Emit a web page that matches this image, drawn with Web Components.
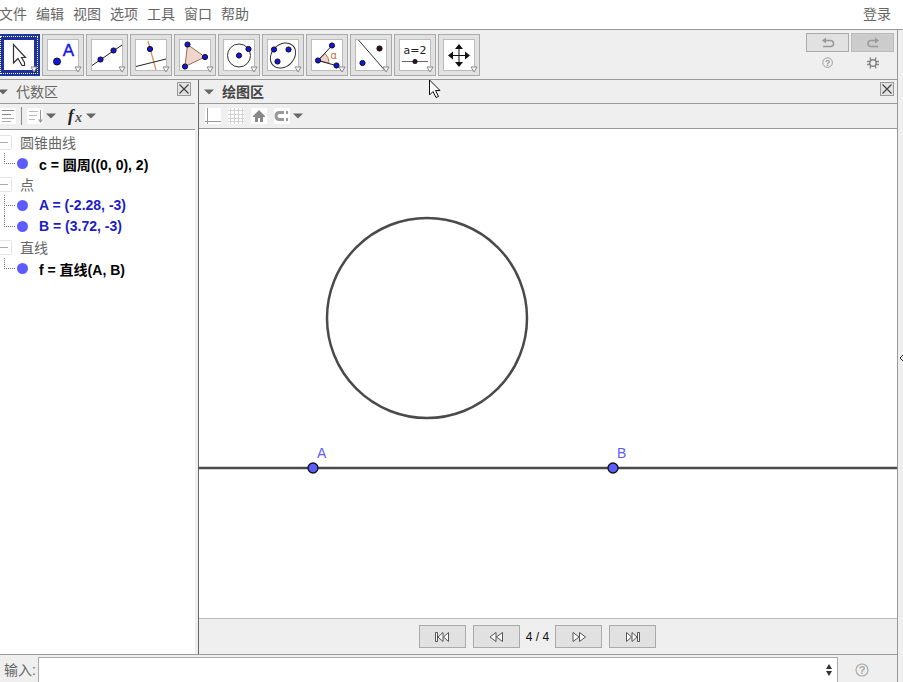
<!DOCTYPE html>
<html lang="zh-CN">
<head>
<meta charset="utf-8">
<title>GeoGebra</title>
<style>
html, body { margin: 0; height: 100%; }
body { font: 14px/20px "Liberation Sans", "Noto Sans CJK SC", sans-serif; color: #666; background: #efefef; overflow: hidden; }
geo-app { height: 100%; }
</style>
</head>
<body>
<geo-app></geo-app>
<script>
const define = (name, html, setup) => customElements.define(name, class extends HTMLElement {
  constructor() {
    super();
    const t = document.createElement('template');
    t.innerHTML = html;
    this.attachShadow({ mode: 'open' }).append(t.content.cloneNode(true));
  }
  connectedCallback() { if (setup) setup(this, this.shadowRoot); }
});

const dot = (x, y, r = 2.6, c = '#1414e6') => `<circle cx="${x}" cy="${y}" r="${r}" fill="${c}" stroke="#111" stroke-width="1"/>`;
const icons = {
  move: [30, 30, '<path d="M9.500 4.500V23L14 18.500L18 25.500H20.500V22.500L17.500 17.500H21.500Z" fill="#fff" stroke="#333" stroke-width="1.200"/>'],
  point: [30, 30, dot(9, 21.5, 3.5) + '<text x="20.500" y="16" text-anchor="middle" font-size="17" font-family="Liberation Sans" fill="#1414e6" stroke="#1414e6" stroke-width=".4">A</text>'],
  line: [30, 30, '<path d="M0 25.500L30 5" stroke="#222" fill="none"/>' + dot(8.5, 19.5) + dot(21.5, 10.5)],
  perp: [30, 30, '<path d="M12 1L20 30" stroke="#d9935b" stroke-width="1.300"/><path d="M0 26.500L30 19" stroke="#222"/>' + dot(14, 9)],
  polygon: [30, 30, '<path d="M7.500 4.500L25 17L5 26.500Z" fill="#edd6cb" stroke="#a06b4a"/>' + dot(7.5, 4.5) + dot(25, 17) + dot(5, 26.5)],
  circle: [30, 30, '<circle cx="15" cy="15.500" r="11.500" fill="none" stroke="#333"/>' + dot(15, 15.5) + dot(24.5, 9)],
  conic: [30, 30, '<ellipse cx="15" cy="15.500" rx="14" ry="11" transform="rotate(-45 15 15.500)" fill="none" stroke="#333"/>' + dot(6, 9.5) + dot(20.5, 9.5) + dot(9.5, 21.5)],
  angle: [30, 30, '<path d="M6 20.500L13 13.500Q17 17 17 23Z" fill="#edd6cb" stroke="#b47a55"/><path d="M20 5.500L6 20.500L24 25.500" fill="none" stroke="#222"/>' + dot(20, 5.5) + dot(6, 20.5) + dot(24.5, 25.5) + '<text x="21.500" y="19" text-anchor="middle" font-size="10" fill="#b8622d">α</text>'],
  reflect: [30, 30, '<path d="M2.500 0L28.500 30" stroke="#333"/>' + dot(23.5, 8.5, 2.6, '#301018') + dot(6.5, 23)],
  slider: [30, 30, '<text x="15" y="14" text-anchor="middle" font-size="11" fill="#222" font-family="DejaVu Sans">a=2</text><path d="M2 21.500H28" stroke="#666"/><circle cx="15" cy="21.500" r="2.500" fill="#201520"/>'],
  view: [30, 30, '<path d="M15 7V24M7 15.500H23" stroke="#111"/><path d="M15 4L19 9H11ZM15 27L19 22H11ZM4 15.500L9 11.500V19.500ZM26 15.500L21 11.500V19.500Z" fill="#111"/>'],
  undo: [16, 14, '<path d="M4 4.500H10.500Q13.500 4.500 13.500 7.500T10.500 10.500H3" fill="none" stroke="#999" stroke-width="1.500"/><path d="M2 4.500L6 1.500V7.500Z" fill="#999"/>'],
  redo: [16, 14, '<path d="M11 4.500H6Q3 4.500 3 7.500T6 10.500H13" fill="none" stroke="#999" stroke-width="1.500"/><path d="M14 4.500L10 1.500V7.500Z" fill="#999"/>'],
  help: [14, 14, '<circle cx="7" cy="7" r="6" fill="none" stroke="currentColor" stroke-width="1.200"/><text x="7" y="11" text-anchor="middle" font-size="11" font-weight="700" fill="currentColor" font-family="Liberation Sans">?</text>'],
  gear: [12, 12, '<circle cx="6" cy="6" r="3.300" fill="none" stroke="#888" stroke-width="1.500"/><path d="M4 3.500L3 .5M8 3.500L9 .5M4 8.500L3 11.500M8 8.500L9 11.500M3.500 4.500H0M8.500 4.500H12M3.500 7.500H0M8.500 7.500H12" stroke="#888" stroke-width="1.400"/>'],
  down: [10, 6, '<path d="M0 .5H10L5 5.500Z" fill="#666"/>'],
  close: [14, 14, '<rect x=".5" y=".5" width="13" height="13" fill="#e3e3e3" stroke="#999"/><path d="M2.500 2.500L11.500 11.500M11.500 2.500L2.500 11.500" stroke="#444" stroke-width="1.200"/>'],
  desc: [16, 16, '<path d="M0 0H16V16H0Z" fill="#fff"/><path d="M2 2.500H14M2 6.500H11" stroke="#888"/><path d="M2 10.500H14M2 13.500H11" stroke="#aaa"/>'],
  sort: [16, 16, '<path d="M0 0H16V16H0Z" fill="#fff"/><path d="M2 3.500H11M2 7.500H10M2 11.500H8" stroke="#bbb"/><path d="M13.500 2V12" stroke="#999"/><path d="M11 11.500H16L13.500 15Z" fill="#999"/>'],
  fx: [17, 22, '<g font-family="Liberation Serif" font-style="italic" font-weight="700"><text x="2" y="16" font-size="17" fill="#222">f</text><text x="9" y="17" font-size="14" fill="#555">x</text></g>'],
  axes: [16, 16, '<path d="M0 0H16V16H0Z" fill="#fff"/><path d="M2.500 0V16M0 13.500H16" stroke="#999"/>'],
  grid: [16, 16, '<path d="M0 0H16V16H0Z" fill="#fff"/><path d="M2.500 0V16M6.500 0V16M10.500 0V16M14.500 0V16M0 2.500H16M0 6.500H16M0 10.500H16M0 13.500H16" stroke="#d2d2d2"/>'],
  home: [16, 16, '<path d="M0 0H16V16H0Z" fill="#fff"/><path d="M8 2L14 8V9H12V14H9V10H7V14H4V9H2V8Z" fill="#888"/>'],
  magnet: [16, 16, '<path d="M0 0H16V16H0Z" fill="#fff"/><path d="M10 4.500H5.500Q2 4.500 2 8T5.500 11.500H10" fill="none" stroke="#999" stroke-width="3"/><path d="M12 3H14V6H12ZM12 10H14V13H12Z" fill="#999"/>'],
  prev: [14, 12, '<path d="M7 1.500V10.500L1 6ZM13.500 1.500V10.500L7.500 6Z" fill="#fff" stroke="#555"/>'],
  next: [14, 12, '<path d="M1 1.500V10.500L7 6ZM7.500 1.500V10.500L13.500 6Z" fill="#fff" stroke="#555"/>'],
  first: [16, 12, '<path d="M1.500 1.500H3.500V10.500H1.500ZM9 1.500V10.500L4 6ZM14.500 1.500V10.500L9.500 6Z" fill="#fff" stroke="#555"/>'],
  last: [16, 12, '<path d="M12.500 1.500H14.500V10.500H12.500ZM1.500 1.500V10.500L6.500 6ZM7 1.500V10.500L12 6Z" fill="#fff" stroke="#555"/>'],
  spin: [6, 12, '<path d="M3 0L6 5H0ZM3 12L6 7H0Z" fill="#333"/>'],
  collapse: [3, 8, '<path d="M3 1L0 4L3 7" fill="none" stroke="#222"/>'],
  cursor: [14, 20, '<path d="M.5 1V16L4 12.500L7 18.500L9.500 17.500L6.500 11.500H11Z" fill="#fff" stroke="#111"/>']
};

define('geo-icon', `<style>:host{display:block;flex:none;line-height:0}svg{display:block;overflow:hidden;font-family:"Open Sans",sans-serif}</style>`, (el, root) => {
  const [w, h, body] = icons[el.getAttribute('name')];
  const k = Number(el.getAttribute('scale') || 1);
  root.innerHTML += `<svg width="${w * k}" height="${h * k}" viewBox="0 0 ${w} ${h}" aria-hidden="true">${body}</svg>`;
});

define('geo-menu', `<style>
:host{display:flex;justify-content:space-between;background:#fff;border-bottom:1px solid #999;height:29px;align-items:center;overflow:hidden}
nav{display:flex;gap:9px;margin-left:-1px}
button{font:inherit;color:inherit;border:0;padding:0 0 2px;background:none;white-space:nowrap}
nav+button{margin-right:12px}
</style><nav></nav><button>登录</button>`, (el, root) => {
  root.querySelector('nav').innerHTML = ['文件', '编辑', '视图', '选项', '工具', '窗口', '帮助'].map(t => `<button>${t}</button>`).join('');
});

define('geo-tool', `<style>
:host{display:block;flex:none}
button{position:relative;box-sizing:border-box;display:grid;place-items:center;width:42px;height:42px;padding:0;background:#e1e1e1;border:1px solid #aaa}
.face{background:#fff;border:1px solid #bbb}
.arrow{position:absolute;right:1px;bottom:2px}
:host([selected]) button{background:#1c2fa0;border-color:#173f8c;outline:1px dotted #fff;outline-offset:-3px}
:host([selected]) .face{border-color:#1c2fa0}
</style><button><div class="face"></div><svg class="arrow" width="8" height="7" aria-hidden="true"><path d="M1 1H7L4 6Z" fill="#fff" stroke="#888"/></svg></button>`, (el, root) => {
  const name = el.getAttribute('icon');
  root.querySelector('button').setAttribute('aria-label', name);
  root.querySelector('.face').innerHTML = `<geo-icon name="${name}"></geo-icon>`;
});

define('geo-toolbar', `<style>
:host{display:flex;justify-content:space-between;height:49px;border-bottom:1px solid #999;overflow:hidden}
.tools{display:flex;gap:2px;padding-top:4px;margin-left:-2px}
.side{display:grid;grid-template-columns:43px 43px;grid-template-rows:19px 14px;gap:4px 2px;padding:3px 3px 0 0;align-content:start;color:#999}
button{display:grid;place-items:center;padding:0;border:1px solid #aaa;background:#e1e1e1;color:inherit}
button:disabled{background:#ccc;border-color:#bbb}
.plain{border:0;background:none}
</style><div class="tools"></div><div class="side">
<button aria-label="撤销"><geo-icon name="undo"></geo-icon></button><button aria-label="重做" disabled><geo-icon name="redo"></geo-icon></button>
<button class="plain" aria-label="帮助"><geo-icon name="help" scale=".8"></geo-icon></button><button class="plain" aria-label="设置"><geo-icon name="gear"></geo-icon></button></div>`, (el, root) => {
  root.querySelector('.tools').innerHTML = ['move', 'point', 'line', 'perp', 'polygon', 'circle', 'conic', 'angle', 'reflect', 'slider', 'view'].map((n, i) => `<geo-tool icon="${n}" ${i ? '' : 'selected'}></geo-tool>`).join('');
});

define('geo-panel', `<style>
:host{display:flex;flex-direction:column;min-width:0;min-height:0}
header{display:flex;align-items:center;height:23px;border-bottom:1px solid #999;padding:0 var(--end,3px) 0 5px;overflow:hidden}
header>geo-icon{margin-left:var(--shift,0px)}
h2{flex:1;font:inherit;font-weight:var(--title-weight,400);color:var(--title-color,inherit);margin:0 0 0 8px}
header button{padding:0;border:0;background:none;margin-bottom:5px}
.styles{display:flex;align-items:center;height:var(--styles-height,24px);border-bottom:1px solid #999}
.body{flex:1;min-height:0;background:#fff;display:flex;flex-direction:column}
</style><header><geo-icon name="down"></geo-icon><h2><slot name="title"></slot></h2><button aria-label="关闭"><geo-icon name="close"></geo-icon></button></header>
<div class="styles"><slot name="styles"></slot></div><div class="body"><slot></slot></div>`);

define('geo-styles', `<style>
:host{display:flex;align-items:center}
button{display:flex;align-items:center;gap:3px;padding:0;border:0;background:none}
.algebra,.graphics{display:flex;align-items:center}
.algebra{gap:5px;padding-bottom:2px}.graphics{gap:7px;padding-left:6px}
i{width:1px;height:18px;background:#888}
.algebra button:last-child{margin-left:5px}
</style><div></div>`, (el, root) => {
  const b = (n, menu) => `<button aria-label="${n}"><geo-icon name="${n}"></geo-icon>${menu ? '<geo-icon name="down"></geo-icon>' : ''}</button>`;
  const kind = el.getAttribute('kind'), d = root.querySelector('div');
  d.className = kind;
  d.innerHTML = kind === 'algebra' ? b('desc') + '<i></i>' + b('sort', 1) + b('fx', 1) : b('axes') + b('grid') + b('home') + b('magnet', 1);
});

define('geo-group', `<style>
:host{display:block}
.head{display:flex;align-items:center;height:21px;gap:8px}
button{box-sizing:border-box;width:12px;height:15px;padding:0;border:1px solid #e4e4e4;border-left:0;border-radius:0 2px 2px 0;background:#fff;display:flex;align-items:center}
button::before{content:"";width:8px;height:1px;background:#aaa}
</style><div class="head"><button aria-label="折叠"></button><slot name="label"></slot></div><slot></slot>`);

define('geo-object', `<style>
:host{display:grid;grid-template-columns:17px 22px 1fr;height:21px;color:#000;font-weight:700;white-space:nowrap}
:host([point]){color:#1c1cc8}
.branch{width:10px;height:10px;margin-left:4px;border:dotted #777;border-width:0 0 1px 1px}
:host([more]) .branch::after{content:"";display:block;height:21px;margin-left:-1px;border-left:1px dotted #777}
button{width:11px;height:11px;margin-top:5px;padding:0;border:0;border-radius:50%;background:#5c5cff}
span{padding-top:2px}
:host([point]) span{padding-top:0}
</style><div class="branch"></div><button aria-label="显示"></button><span><slot></slot></span>`);

define('geo-canvas', `<style>:host{display:block;flex:1;min-height:0}svg{display:block;width:100%;height:100%;font:14px "Liberation Sans",sans-serif}</style>
<svg role="img" aria-label="绘图区"><g fill="none" stroke="#4a4a4a" stroke-width="2.500"><circle cx="228" cy="189" r="100"/><line x1="0" y1="339" x2="100%" y2="339"/></g>
<g fill="#5c5cff" stroke="#111" stroke-width="1.300"><circle cx="114" cy="339" r="5"/><circle cx="414" cy="339" r="5"/></g>
<g fill="#5c5cff"><text x="118" y="329">A</text><text x="418" y="329">B</text></g></svg>`);

define('geo-steps', `<style>
:host{display:flex;justify-content:center;align-items:center;gap:7px;height:35px;padding-right:21px;background:#efefef;border-top:1px solid #bbb;font-size:12px;color:#111}
button{box-sizing:border-box;width:47px;height:23px;display:grid;place-items:center;padding:0;border:1px solid #aaa;background:#e1e1e1}
span{margin:0 -1px}
</style><button aria-label="第一步"><geo-icon name="first"></geo-icon></button><button aria-label="上一步"><geo-icon name="prev"></geo-icon></button><span>4 / 4</span><button aria-label="下一步"><geo-icon name="next"></geo-icon></button><button aria-label="最后一步"><geo-icon name="last"></geo-icon></button>`);

define('geo-input', `<style>
:host{display:flex;height:27px;border-top:1px solid #999;overflow:hidden}
label{padding:5px 2px 0 4px}
.field{flex:1;display:flex;align-items:center;margin-top:2px;border:solid #aaa;border-width:1px 1px 0;background:#fff}
input{flex:1;min-width:0;height:20px;border:0;padding:0 4px;font:inherit;outline:0}
button{border:0;background:none;padding:0 5px}
.help{width:59px;color:#aaa;display:grid;place-items:center;padding:3px 11px 0 0}
</style><label for="command">输入:</label><div class="field"><input id="command"><button aria-label="历史"><geo-icon name="spin"></geo-icon></button></div><button class="help" aria-label="输入帮助"><geo-icon name="help"></geo-icon></button>`);

define('geo-app', `<style>
:host{display:grid;grid-template-columns:minmax(0,1fr) 5px;grid-template-rows:auto minmax(0,1fr);position:relative}
geo-menu{grid-column:1/-1}
.main{display:flex;flex-direction:column;min-height:0;border-right:1px solid #999}
.views{flex:1;display:grid;grid-template-columns:195px minmax(0,1fr);column-gap:3px;min-height:0}
.algebra{--shift:-7px;--end:4px;--styles-height:25px}
.algebra>geo-group:first-of-type{margin-top:2px}
.graphics{border-left:1px solid #666;--title-weight:700;--title-color:#444}
.edge{border:0;padding:4px 0 0;background:none;display:grid;place-items:center end}
.cursor{position:absolute;left:429px;top:79px}
</style><geo-menu></geo-menu><div class="main"><geo-toolbar></geo-toolbar><div class="views">
<geo-panel class="algebra"><span slot="title">代数区</span><geo-styles slot="styles" kind="algebra"></geo-styles>
<geo-group><span slot="label">圆锥曲线</span><geo-object>c = 圆周((0, 0), 2)</geo-object></geo-group>
<geo-group><span slot="label">点</span><geo-object point more>A = (-2.28, -3)</geo-object><geo-object point>B = (3.72, -3)</geo-object></geo-group>
<geo-group><span slot="label">直线</span><geo-object>f = 直线(A, B)</geo-object></geo-group></geo-panel>
<geo-panel class="graphics"><span slot="title">绘图区</span><geo-styles slot="styles" kind="graphics"></geo-styles><geo-canvas></geo-canvas><geo-steps></geo-steps></geo-panel>
</div><geo-input></geo-input></div><button class="edge" aria-label="展开侧栏"><geo-icon name="collapse"></geo-icon></button><geo-icon class="cursor" name="cursor"></geo-icon>`);
</script>
</body>
</html>
